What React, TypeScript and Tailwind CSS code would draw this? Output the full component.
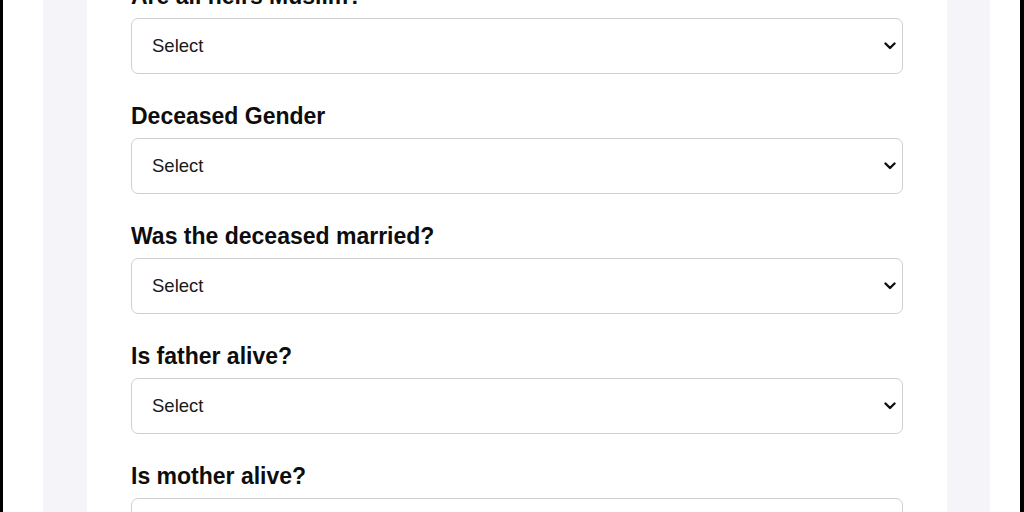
import React from "react";

const fields = [
  "Are all heirs Muslim?",
  "Deceased Gender",
  "Was the deceased married?",
  "Is father alive?",
  "Is mother alive?",
];

const Chevron = () => (
  <svg
    width="12"
    height="8"
    viewBox="0 0 12 8"
    className="pointer-events-none absolute right-[7px] top-1/2 -translate-y-1/2"
  >
    <path d="M1.5 1.5 L6 6 L10.5 1.5" fill="none" stroke="#111" strokeWidth="2.4" strokeLinecap="round" strokeLinejoin="round" />
  </svg>
);

const Field = ({ label }: { label: string }) => (
  <div className="mb-[30px]">
    <label className="block text-[23px] leading-[24px] font-bold text-[#0d0d0d] mb-[10px]">{label}</label>
    <div className="relative">
      <select className="w-full h-[56px] appearance-none rounded-[7px] border border-[#cfcfcf] bg-white pl-[20px] text-[18.5px] text-[#1a1a1a] outline-none">
        <option>Select</option>
      </select>
      <Chevron />
    </div>
  </div>
);

export default function App() {
  return (
    <div
      className="h-[512px] overflow-hidden bg-white border-l-[3px] border-r-[4px] border-black"
      style={{ fontFamily: '"Liberation Sans", Arial, sans-serif' }}
    >
      <div className="h-full pl-[40px] pr-[30px]">
        <div className="h-full bg-[#f5f5f9] pl-[44px] pr-[43px]">
          <div className="h-full bg-white px-[44px] flex flex-col overflow-hidden">
            <div className="-mt-[16px]">
              {fields.map((f) => (
                <Field key={f} label={f} />
              ))}
            </div>
          </div>
        </div>
      </div>
    </div>
  );
}
